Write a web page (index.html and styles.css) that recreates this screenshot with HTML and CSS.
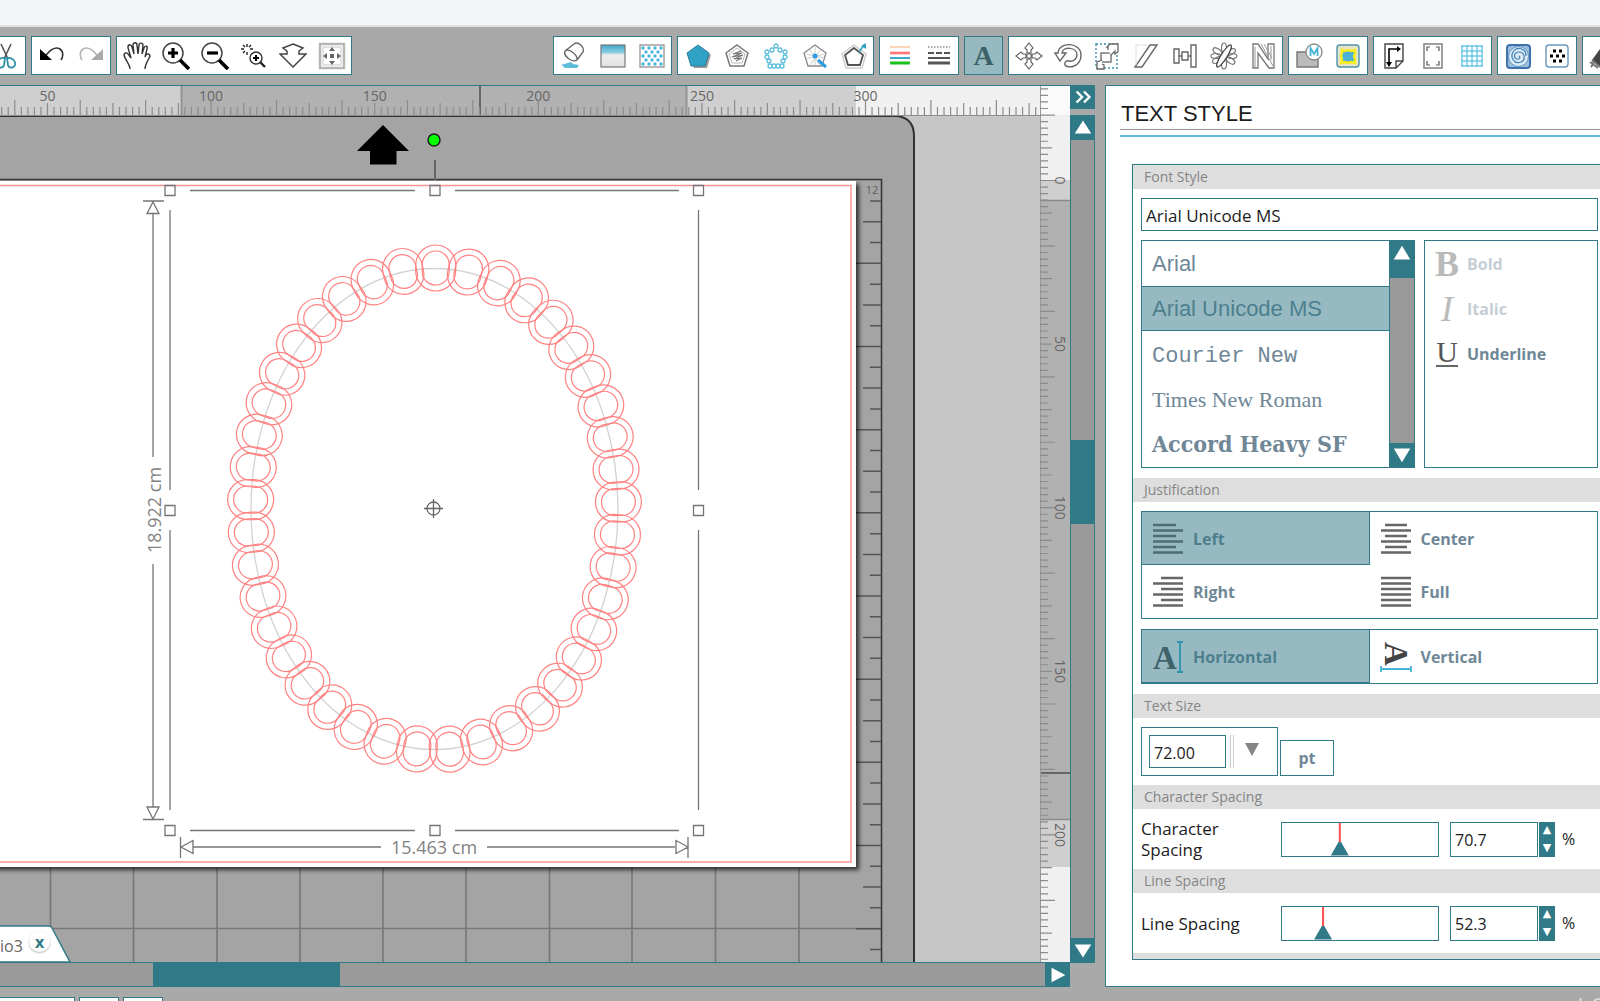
FILE: index.html
```html
<!DOCTYPE html>
<html lang="en">
<head>
  <meta charset="UTF-8">
  <title>Text Style</title>
  <meta name="viewport" content="width=device-width, initial-scale=1.0">
  <link rel="stylesheet" href="styles.css">
</head>
<body>
  <div class="title-strip"></div>

  <header class="toolbar">
    <nav class="tools" aria-label="Edit and view">
      <div class="group group-cut">
        <button aria-label="Cut"><svg viewBox="0 0 28 28"><path d="M9 2l7 15M19 2l-7 15" stroke="#555" stroke-width="1.6"/><g stroke="#2f8ea8" stroke-width="1.8"><path d="M13 16c-5-1-9 3-8 7 1 3 6 4 7 0zM15 16c5-1 9 3 8 7-1 3-6 4-7 0z"/></g></svg></button>
      </div>
      <div class="group">
        <button aria-label="Undo"><svg viewBox="0 0 28 28"><path d="M6 16C12 7 17 4 22 7c4 3 3 8 1 11" stroke="#333" stroke-width="1.6"/><path d="M2 7v11h12z" fill="#000"/></svg></button>
        <button aria-label="Redo"><svg viewBox="0 0 28 28"><path d="M22 16C16 7 11 4 6 7c-4 3-3 8-1 11" stroke="#b5b5b5" stroke-width="1.6"/><path d="M26 7v11H14z" fill="#aaa"/></svg></button>
      </div>
      <div class="group">
        <button aria-label="Pan"><svg viewBox="0 0 28 28"><path d="M7 27c0-5-5-9-6-14 0-2 3-3 4-1l3 4C7 12 5 7 5 5c0-3 3-3 4 0l2 7-1-9c0-3 4-3 4 0l1 9 1-9c0-3 4-2 4 0l-1 9 2-6c1-3 4-2 3 1l-2 8 1-2c1-2 4-1 4 1-2 5-5 8-5 13" stroke="#333" stroke-width="1.4"/></svg></button>
        <button aria-label="Zoom in"><svg viewBox="0 0 28 28"><circle cx="11" cy="11" r="10" stroke="#444" stroke-width="1.5"/><path d="M11 6v10M6 11h10" stroke="#000" stroke-width="3.2"/><path d="M18 18l9 9" stroke="#000" stroke-width="3.6"/></svg></button>
        <button aria-label="Zoom out"><svg viewBox="0 0 28 28"><circle cx="11" cy="11" r="10" stroke="#444" stroke-width="1.5"/><path d="M6 11h11" stroke="#000" stroke-width="3.2"/><path d="M18 18l9 9" stroke="#000" stroke-width="3.6"/></svg></button>
        <button aria-label="Zoom to selection"><svg viewBox="0 0 28 28"><path d="M7 2v3M7 10v3M1 7h3M10 7h3M3 3l2 2M11 3L9 5M3 11l2-2" stroke="#222" stroke-width="1.4"/><circle cx="16" cy="16" r="6" stroke="#333" stroke-width="1.4"/><path d="M16 13v6M13 16h6" stroke="#000" stroke-width="2"/><path d="M20 20l5 5" stroke="#222" stroke-width="2.4"/></svg></button>
        <button aria-label="Drag zoom"><svg viewBox="0 0 28 28"><path d="M14 2l10 4-4 3v3h7L14 25 1 12h7V9L4 6z" stroke="#444" stroke-width="1.5"/></svg></button>
        <button aria-label="Fit to window"><svg viewBox="0 0 28 28"><rect x="2" y="2" width="24" height="24" stroke="#b5b5b5" stroke-width="2.4"/><rect x="5" y="5" width="18" height="18" stroke="#c8c8c8"/><path d="M14 5l3 4h-6zM14 23l3-4h-6zM5 14l4-3v6zM23 14l-4-3v6zM12 12h4v4h-4z" fill="#666"/></svg></button>
      </div>
    </nav>

    <nav class="tools" aria-label="Object tools">
      <div class="group">
        <button aria-label="Fill color"><svg viewBox="0 0 28 28"><path d="M1 23l10-3 2 2 6 1-2 3H5l-2-2z" fill="#5cbcda"/><path d="M5 9L14 2c4-3 11 3 9 8l-6 8c-5 3-14-4-12-9zM5 9c4-3 13 4 12 9" stroke="#666" stroke-width="1.4"/></svg></button>
        <button aria-label="Fill gradient"><svg viewBox="0 0 28 28"><defs><linearGradient id="sky" x1="0" y1="0" x2="0" y2="1"><stop offset="0" stop-color="#3fa9ca"/><stop offset=".35" stop-color="#8fd0e4"/><stop offset=".45" stop-color="#eee"/><stop offset="1" stop-color="#e2e2e2"/></linearGradient></defs><rect x="2" y="3" width="24" height="22" fill="url(#sky)" stroke="#777" stroke-width="1.2"/></svg></button>
        <button aria-label="Fill pattern"><svg viewBox="0 0 28 28"><rect x="2" y="3" width="24" height="22" stroke="#888" stroke-width="1.2"/><g stroke="#4ab6dc" stroke-width="3.4" stroke-linecap="round" stroke-dasharray="0 6"><path d="M5 6h19M8 10h17M5 14h19M8 18h17M5 22h19"/></g></svg></button>
      </div>
      <div class="group">
        <button aria-label="Shadow"><svg viewBox="0 0 28 28"><path d="M16 6l11 7-4 13H10L6 13z" fill="#999"/><path d="M14 3l11 8-4 13H7L3 11z" fill="#2fa2c5" stroke="#2b7f98"/></svg></button>
        <button aria-label="Sketch"><svg viewBox="0 0 28 28"><path d="M14 3l11 8-4 13H7L3 11z" stroke="#777" stroke-width="1.5"/><path d="M14 6l8 6-3 9H9l-3-9z" stroke="#bbb"/><path d="M18 9l-8 3 9-1-10 4 11-2-9 4 8-1-6 3" stroke="#777" stroke-width="1.1"/></svg></button>
        <button aria-label="Rhinestones"><svg viewBox="0 0 28 28"><g stroke="#5fc0dd" stroke-width="1.3"><circle cx="14" cy="4" r="2"/><circle cx="10" cy="8" r="2"/><circle cx="18" cy="8" r="2"/><circle cx="5" cy="10" r="2"/><circle cx="23" cy="10" r="2"/><circle cx="5" cy="15" r="2"/><circle cx="23" cy="15" r="2"/><circle cx="7" cy="19" r="2"/><circle cx="21" cy="19" r="2"/><circle cx="8" cy="24" r="2"/><circle cx="12" cy="24" r="2"/><circle cx="16" cy="24" r="2"/><circle cx="20" cy="24" r="2"/></g></svg></button>
        <button aria-label="Trace"><svg viewBox="0 0 28 28"><path d="M14 3l11 8-4 13H7L3 11z" stroke="#888" stroke-width="1.3"/><path d="M14 5v18M5 12l18 4M23 12L5 17M9 23l10-15M19 23L9 8" stroke="#ccc"/><circle cx="14" cy="14" r="2.5" fill="#2f9be0"/><path d="M17 18l8 7" stroke="#2f9be0" stroke-width="3"/></svg></button>
        <button aria-label="Offset"><svg viewBox="0 0 28 28"><path d="M14 3l12 9-4 14H6L2 12z" stroke="#ccc" stroke-width="1.4"/><path d="M14 6l9 7-3 10H8L5 13z" stroke="#555" stroke-width="1.8"/><path d="M19 10l5-7" stroke="#33a1c4" stroke-width="1.6"/><path d="M26 1v6l-5-3z" fill="#33a1c4"/></svg></button>
      </div>
      <div class="group">
        <button aria-label="Line color"><svg viewBox="0 0 28 28"><path d="M4 5h20" stroke="#fbc9a0" stroke-width="1.5"/><path d="M4 11h20" stroke="#f77" stroke-width="2.6"/><path d="M4 16h20" stroke="#3fa9ca" stroke-width="2"/><path d="M4 21h20" stroke="#1abf1a" stroke-width="3"/></svg></button>
        <button aria-label="Line style"><svg viewBox="0 0 28 28"><path d="M3 5h22" stroke="#555" stroke-width="1.2" stroke-dasharray="1.5 1.5"/><path d="M3 11h22" stroke="#555" stroke-width="2" stroke-dasharray="6 2"/><path d="M3 16h22" stroke="#555" stroke-width="2"/><path d="M3 21h22" stroke="#555" stroke-width="3"/></svg></button>
      </div>
      <div class="group">
        <button class="active letter" aria-label="Text style" aria-pressed="true">A</button>
      </div>
      <div class="group">
        <button aria-label="Move"><svg viewBox="0 0 28 28"><g stroke="#666" stroke-width="1.2"><path d="M14 1l4 5-2 2v3h-4V8l-2-2zM14 27l4-5-2-2v-3h-4v3l-2 2zM1 14l5-4 2 2h3v4H8l-2 2zM27 14l-5-4-2 2h-3v4h3l2 2z"/><path d="M14 11l3 3-3 3-3-3z"/></g></svg></button>
        <button aria-label="Rotate"><svg viewBox="0 0 28 28"><path d="M1 11l3 0C5-1 27 0 27 13c0 12-13 14-16 10-1-3 2-5 4-4 4 1 8-2 8-6 0-8-14-9-15-2h4l-6 8z" stroke="#666" stroke-width="1.4"/></svg></button>
        <button aria-label="Scale"><svg viewBox="0 0 28 28"><rect x="3" y="2" width="21" height="24" stroke="#3a93aa" stroke-width="1.4" stroke-dasharray="2 2"/><rect x="8" y="11" width="10" height="9" fill="#fff" stroke="#666" stroke-width="1.3"/><path d="M15 8V5h-1l3-3h8v8l-3 2V9l-4 4M9 18l-5 2v7h7v-4l-2-1" fill="#fff" stroke="#666" stroke-width="1.3"/></svg></button>
        <button aria-label="Shear"><svg viewBox="0 0 28 28"><path d="M18 3h7L10 25H3z" stroke="#666" stroke-width="1.4"/><path d="M16 3H4v20" stroke="#ddd"/></svg></button>
        <button aria-label="Align"><svg viewBox="0 0 28 28"><path d="M3 7h5v14H3zM11 10h6v8h-6zM20 3h5v22h-5zM8 14h3M17 14h3" stroke="#666" stroke-width="1.4"/></svg></button>
        <button aria-label="Replicate"><svg viewBox="0 0 28 28"><g stroke="#777" stroke-width="1.2"><ellipse cx="14" cy="6" rx="2.5" ry="5"/><ellipse cx="14" cy="22" rx="2.5" ry="5"/><g transform="rotate(60 14 14)"><ellipse cx="14" cy="6" rx="2.5" ry="5"/><ellipse cx="14" cy="22" rx="2.5" ry="5"/></g><g transform="rotate(90 14 14)"><ellipse cx="14" cy="6" rx="2.5" ry="5"/><ellipse cx="14" cy="22" rx="2.5" ry="5"/></g><g transform="rotate(125 14 14)"><ellipse cx="14" cy="6" rx="2.5" ry="5"/><ellipse cx="14" cy="22" rx="2.5" ry="5"/></g><ellipse cx="14" cy="14" rx="3" ry="13" transform="rotate(32 14 14)" fill="#fff" stroke="#444"/></g></svg></button>
        <button aria-label="Nesting"><svg viewBox="0 0 28 28"><path d="M4 26V2h5l10 15V2h6v24h-5L9 11v15z" stroke="#777" stroke-width="1.3"/><path d="M12 2l12 22M15 2l8 14M6 5v20M22 4v14" stroke="#999"/></svg></button>
      </div>
      <div class="group">
        <button aria-label="Modify"><svg viewBox="0 0 28 28"><path d="M2 10h21v15H2z" fill="#bbb" stroke="#777" stroke-width="1.4"/><circle cx="19" cy="10" r="8" fill="#fff" stroke="#888" stroke-width="1.3"/><path d="M15.5 14V6l3.500 6 3.500-6v8" stroke="#45b4d8" stroke-width="1.8"/></svg></button>
        <button aria-label="Trace area"><svg viewBox="0 0 28 28"><rect x="3" y="3" width="22" height="22" rx="3" fill="#e8e4ca" stroke="#4d93aa" stroke-width="1.4"/><path d="M8 8l3 1 3-1 3 1 4-1v4l-1 2 1 3v4l-4-1-3 1-3-1-4 1 1-4-1-3 1-3z" fill="#4db0d6" stroke="#f6ee1a" stroke-width="2.4"/></svg></button>
      </div>
      <div class="group">
        <button aria-label="Page setup"><svg viewBox="0 0 28 28"><path d="M5 2h18v17l-7 7H5zM16 26v-7h7" stroke="#444" stroke-width="1.4"/><path d="M9 24V7h11" stroke="#000" stroke-width="1.6"/><path d="M6 20h6l-3 5zM17 4v6l4-3z" fill="#000"/></svg></button>
        <button aria-label="Registration marks"><svg viewBox="0 0 28 28"><rect x="5" y="2" width="18" height="24" stroke="#888" stroke-width="1.6"/><path d="M8 9V5h3M17 5h3v4M20 19v4h-3M11 23H8v-4" stroke="#555" stroke-width="1.2"/></svg></button>
        <button aria-label="Grid"><svg viewBox="0 0 28 28"><path d="M3 4h22M3 9h22M3 14h22M3 19h22M3 24h22M4 3v22M9 3v22M14 3v22M19 3v22M24 3v22" stroke="#6cc8e6" stroke-width="1.4"/></svg></button>
      </div>
      <div class="group">
        <button aria-label="Library"><svg viewBox="0 0 28 28"><rect x="3" y="3" width="23" height="23" rx="3" fill="#9cc0dc" stroke="#3f72ab" stroke-width="2"/><circle cx="14.5" cy="14.5" r="10" fill="#dceaf4" stroke="#5c93c4"/><path d="M15 14c2 1 0 4-2 3-4-1-3-7 2-7 6 0 7 8 2 10-7 3-11-5-8-10 4-6 13-4 13 4" stroke="#3f7fb8" stroke-width="1.2"/></svg></button>
        <button aria-label="Dot pattern"><svg viewBox="0 0 28 28"><rect x="3" y="3" width="22" height="22" rx="3" stroke="#6a98bd" stroke-width="1.4"/><g stroke="#000" stroke-width="3" stroke-dasharray="3 3"><path d="M10 9h9M7 14h15M10 19h9"/></g></svg></button>
      </div>
      <div class="group group-end">
        <button aria-label="Sketch pen"><svg viewBox="0 0 28 28"><path d="M3 18L14 3l12 6-14 16z" fill="#444"/><path d="M3 18l8 7M1 20l8 6M2 25c2-2 3-4 2-7" stroke="#777" stroke-width="2"/></svg></button>
      </div>
    </nav>
  </header>

  <main class="workspace">
    <section class="document">
      <div class="sheet">
        <div class="sheet-main">
          <svg class="ruler-top" id="rulerTop">
            <rect width="100%" height="30" fill="#f0f0f0"/>
            <rect width="856" height="30" fill="#cfcfcf"/>
            <rect x="181" width="506" height="30" fill="#b1b1b1"/>
            <path d="M181.500 0v29M686.500 0v29" stroke="#939393" stroke-width="2"/>
            <path d="M480 0v29" stroke="#666" stroke-width="2"/>
            <path d="M0 29.500h1600" stroke="#8c8c8c"/>
          </svg>
          <div class="canvas">
            <svg class="drawing">
              <g transform="translate(0 -116)">
                <path d="M-20 116H897q17 2 17 20V1400H-20z" fill="#a4a4a4" stroke="#333" stroke-width="2"/>
                <path d="M50.500 868v500M133.500 868v500M217 868v500M300 868v500M383 868v500M466 868v500M549.500 868v500M632 868v500M715.500 868v500M799 868v500M0 928.500h881" stroke="#777" stroke-width="1.600"/>
                <path d="M-20 179.500H881.500V1400" stroke="#383838" stroke-width="1.600"/>
                <g id="matTicks" stroke="#555" stroke-width="1.500"></g>
                <text x="872" y="194" class="mat-label">12</text>
                <rect class="page" x="-20" y="181" width="876" height="686"/>
                <path d="M-20 185.500H851V862H-20" stroke="#ff9494" stroke-width="1.500"/>

                <path d="M383 125l26 26h-12.500v13.500H370V151h-13z" fill="#000"/>
                <path d="M435 160v20" stroke="#666" stroke-width="2"/>
                <circle cx="434" cy="140" r="6" fill="#0f0" stroke="#222" stroke-width="1.500"/>

                <path id="textPath" d="M434.500 268.500a183.500 240.500 0 0 1 0 481a183.500 240.500 0 0 1 0-481z" stroke="#d2d2d2" stroke-width="1.300"/>
                <g id="rings" stroke="#ff8282" stroke-width="1.200"></g>
                <path d="M424 508.500h19M433.500 499v19" stroke="#666" stroke-width="1.300"/>
                <circle cx="433.500" cy="508.500" r="6.500" stroke="#666" stroke-width="1.300"/>

                <g stroke="#757575" stroke-width="1.300">
                  <path d="M190 190.500h225M455 190.500h224M190 830.500h225M455 830.500h224M170 210v280M170 530v280M698.500 210v280M698.500 530v280"/>
                  <path d="M165 185.500h10v10h-10zM430 185.500h10v10h-10zM693.500 185.500h10v10h-10zM165 505.500h10v10h-10zM693.500 505.500h10v10h-10zM165 825.500h10v10h-10zM430 825.500h10v10h-10zM693.500 825.500h10v10h-10z"/>
                  <path d="M143 201h21M153 202l6 11.500h-12zM153 213v244M153 564v243M153 819l6-12h-12zM143 819.500h21"/>
                  <path d="M180.500 837v21M181 847l12-6.500v13zM193 847h188M487 847h188M688 847l-12-6.500v13zM688 837v21"/>
                </g>
                <text x="434" y="854" class="size-label">15.463 cm</text>
                <text class="size-label" transform="translate(161 510) rotate(-90)">18.922 cm</text>
              </g>
            </svg>
            <div class="doc-tab">
              <svg class="tab-shape" viewBox="0 0 72 37"><path d="M-2 1H49q2 0 3 2L70 37H-2z" fill="#fff" stroke="#307a88" stroke-width="1.500"/></svg>
              <span class="tab-name">io3</span>
              <button class="tab-close" aria-label="Close">x</button>
            </div>
          </div>
        </div>
        <svg class="ruler-side" id="rulerSide">
          <rect width="30" height="100%" fill="#f0f0f0"/>
          <rect width="30" height="29" fill="#fafafa"/>
          <rect y="94" width="30" height="687" fill="#cfcfcf"/>
          <rect y="114" width="30" height="619" fill="#b1b1b1"/>
          <path d="M0 114.500h30M0 733.500h30" stroke="#8a8a8a" stroke-width="1.500"/>
          <path d="M0 687h30" stroke="#666" stroke-width="2"/>
          <path d="M.5 0v1400" stroke="#999"/>
        </svg>
      </div>
      <div class="hscroll">
        <div class="hscroll-track"><div class="hscroll-thumb"></div></div>
        <button class="scroll-btn" aria-label="Scroll right"><svg viewBox="0 0 24 24"><path d="M5 4l15 8-15 8z" fill="#fff"/></svg></button>
      </div>
    </section>

    <div class="vscroll">
      <button class="scroll-btn" aria-label="Collapse panels"><svg viewBox="0 0 24 24"><path d="M5 6l6 6-6 6M13 6l6 6-6 6" stroke="#fff" stroke-width="2.600"/></svg></button>
      <button class="scroll-btn up" aria-label="Scroll up"><svg viewBox="0 0 24 24"><path d="M3 19l9-14 9 14z" fill="#fff"/></svg></button>
      <div class="vscroll-track"><div class="vscroll-thumb"></div></div>
      <button class="scroll-btn" aria-label="Scroll down"><svg viewBox="0 0 24 24"><path d="M3 5l9 14 9-14z" fill="#fff"/></svg></button>
    </div>

    <aside class="side">
      <h1>TEXT STYLE</h1>
      <div class="rules"></div>

      <div class="panel">
        <h2>Font Style</h2>
        <div class="block">
          <input class="field font-name" type="text" value="Arial Unicode MS" aria-label="Font name">
          <div class="font-row">
            <div class="font-list">
              <div class="fonts" role="radiogroup" aria-label="Fonts">
                <label class="font f-sans"><input type="radio" name="font">Arial</label>
                <label class="font f-sans"><input type="radio" name="font" checked>Arial Unicode MS</label>
                <label class="font f-mono"><input type="radio" name="font">Courier New</label>
                <label class="font f-serif"><input type="radio" name="font">Times New Roman</label>
                <label class="font f-heavy"><input type="radio" name="font">Accord Heavy SF</label>
              </div>
              <div class="list-scroll">
                <button class="list-up" aria-label="Up"><svg viewBox="0 0 24 24"><path d="M3 19l9-15 9 15z" fill="#fff"/></svg></button>
                <button class="list-down" aria-label="Down"><svg viewBox="0 0 24 24"><path d="M3 5l9 15 9-15z" fill="#fff"/></svg></button>
              </div>
            </div>
            <div class="weights">
              <button disabled><span class="glyph g-bold">B</span>Bold</button>
              <button disabled><span class="glyph g-italic">I</span>Italic</button>
              <button><span class="glyph g-under">U</span>Underline</button>
            </div>
          </div>
        </div>

        <h2>Justification</h2>
        <div class="block">
          <div class="choices" role="radiogroup" aria-label="Justification">
            <label class="choice"><input type="radio" name="just" checked><svg viewBox="0 0 32 32"><path d="M1 2h23M1 7.500h30M1 13h23M1 18.500h30M1 24h23M1 29.500h30" stroke="#4d6c74" stroke-width="2.400"/></svg>Left</label>
            <label class="choice"><input type="radio" name="just"><svg viewBox="0 0 32 32"><path d="M5 2h22M1 7.500h30M5 13h22M1 18.500h30M5 24h22M1 29.500h30" stroke="#666" stroke-width="2.400"/></svg>Center</label>
            <label class="choice"><input type="radio" name="just"><svg viewBox="0 0 32 32"><path d="M9 2h22M1 7.500h30M9 13h22M1 18.500h30M9 24h22M1 29.500h30" stroke="#666" stroke-width="2.400"/></svg>Right</label>
            <label class="choice"><input type="radio" name="just"><svg viewBox="0 0 32 32"><path d="M1 2h30M1 7.500h30M1 13h30M1 18.500h30M1 24h30M1 29.500h30" stroke="#666" stroke-width="2.400"/></svg>Full</label>
          </div>
          <div class="choices" role="radiogroup" aria-label="Orientation">
            <label class="choice"><input type="radio" name="dir" checked><svg viewBox="0 0 32 32"><text x="13" y="28" class="icon-a" fill="#3f626b">A</text><path d="M25 1h6M28 1v30M25 31h6" stroke="#2f93b0" stroke-width="1.800"/></svg>Horizontal</label>
            <label class="choice"><input type="radio" name="dir"><svg viewBox="0 0 32 32"><text class="icon-a" fill="#444" transform="translate(5 13) rotate(90)">A</text><path d="M1 25v6M1 28h30M31 25v6" stroke="#45b4d8" stroke-width="1.800"/></svg>Vertical</label>
          </div>
        </div>

        <h2>Text Size</h2>
        <div class="block size-row">
          <div class="combo">
            <input class="field" type="text" value="72.00" aria-label="Text size">
            <button aria-label="Choose size"><svg viewBox="0 0 16 16"><path d="M1 1h14L8 14z" fill="#858585"/></svg></button>
          </div>
          <button class="unit">pt</button>
        </div>

        <h2>Character Spacing</h2>
        <div class="spacing">
          <label for="charRange">Character Spacing</label>
          <input class="slider" type="range" id="charRange" min="0" max="200" step="any" value="70.7">
          <input class="field" type="text" value="70.7" aria-label="Character spacing value">
          <div class="spin"><button aria-label="Increase">▲</button><button aria-label="Decrease">▼</button></div>
          <span>%</span>
        </div>

        <h2>Line Spacing</h2>
        <div class="spacing">
          <label for="lineRange">Line Spacing</label>
          <input class="slider" type="range" id="lineRange" min="0" max="225" step="any" value="52.3">
          <input class="field" type="text" value="52.3" aria-label="Line spacing value">
          <div class="spin"><button aria-label="Increase">▲</button><button aria-label="Decrease">▼</button></div>
          <span>%</span>
        </div>
        <div class="next-head"></div>
      </div>
    </aside>
  </main>

  <footer class="bottom-bar">
    <button class="wide" aria-label="Library view"></button>
    <button aria-label="Split view"></button>
    <button aria-label="Single view"></button>
    <svg class="corner" viewBox="0 0 24 14"><path d="M4.500 11v3M18 14q2-2 6-2" stroke="#e8e8e8" stroke-width="1.500"/></svg>
  </footer>

  <script src="script.js"></script>
</body>
</html>
```

FILE: styles.css
```css
* {
  box-sizing: border-box;
}

body {
  margin: 0;
  height: 100vh;
  display: flex;
  flex-direction: column;
  overflow: hidden;
  background-color: #a9a9a9;
  font-family: "Open Sans", "Noto Sans", sans-serif;
  font-size: 16px;
  color: #1c1c1c;
}

svg {
  fill: none;
}

button {
  margin: 0;
  padding: 0;
  border: none;
  background: none;
  font-family: inherit;
  cursor: pointer;
}

.title-strip {
  flex: none;
  height: 27px;
  background-color: #f3f5f8;
  border-bottom: 2px solid #dfe1e3;
}

/* toolbar */
.toolbar {
  flex: none;
  display: flex;
  justify-content: space-between;
  padding: 9px 0 10px;
}

.tools {
  display: flex;
  gap: 5px;
}

.group {
  display: flex;
  background-color: #fff;
  border: 1px solid #307a88;
}

.group button {
  width: 39px;
  height: 37px;
  display: flex;
  align-items: center;
  justify-content: center;
}

.group svg {
  width: 28px;
  height: 28px;
}

.group-cut {
  margin-left: -15px;
}

.group-end {
  width: 18px;
  border-right: none;
  overflow: hidden;
}

.group-end button {
  flex: none;
}

.group .active {
  width: 37px;
  background-color: #97bac2;
}

.letter {
  font-family: "Liberation Serif", serif;
  font-size: 28px;
  font-weight: bold;
  color: #3c5f68;
}

/* work area */
.workspace {
  flex: 1;
  min-height: 0;
  display: flex;
}

.document {
  flex: 1;
  min-width: 0;
  display: flex;
  flex-direction: column;
}

.sheet {
  flex: 1;
  min-height: 0;
  display: flex;
  border-top: 1px solid #307a88;
}

.sheet-main {
  flex: 1;
  min-width: 0;
  display: flex;
  flex-direction: column;
}

.ruler-top {
  display: block;
  width: 100%;
  height: 30px;
}

.ruler-side {
  display: block;
  flex: none;
  width: 30px;
  height: 100%;
}

.ruler-label {
  font-size: 14px;
  fill: #666;
  text-anchor: middle;
}

.canvas {
  position: relative;
  flex: 1;
  min-height: 0;
  background-color: #c6c6c6;
  overflow: hidden;
}

.drawing {
  display: block;
  width: 100%;
  height: 100%;
}

.page {
  fill: #fff;
  filter: drop-shadow(3px 3px 2px rgba(0, 0, 0, 0.7));
}

.mat-label {
  font-size: 11px;
  fill: #5c5c5c;
  text-anchor: middle;
}

.size-label {
  font-size: 18px;
  fill: #828282;
  text-anchor: middle;
}

.doc-tab {
  position: absolute;
  left: 0;
  bottom: 0;
  width: 72px;
  height: 37px;
  display: flex;
  align-items: center;
}

.tab-shape {
  position: absolute;
  left: 0;
  top: 0;
  width: 72px;
  height: 37px;
}

.tab-name {
  position: relative;
  width: 29px;
  padding-top: 4px;
  font-size: 16px;
  color: #666;
}

.tab-close {
  position: relative;
  width: 21px;
  height: 21px;
  margin-bottom: 4px;
  border-radius: 50%;
  background-color: #fff;
  box-shadow: 0 1px 2px rgba(0, 0, 0, 0.3);
  color: #307a88;
  font-size: 16px;
  line-height: 16px;
  font-weight: bold;
}

/* scrollbars */
.scroll-btn {
  flex: none;
  width: 25px;
  height: 24px;
  background-color: #307a88;
  display: flex;
  align-items: center;
  justify-content: center;
}

.scroll-btn svg {
  width: 22px;
  height: 22px;
}

.hscroll {
  flex: none;
  display: flex;
  height: 25px;
  border: solid #307a88;
  border-width: 1px 0;
  background-color: #9a9a9a;
}

.hscroll-track {
  flex: 1;
}

.hscroll-thumb {
  width: 187px;
  height: 100%;
  margin-left: 153px;
  background-color: #307a88;
}

.vscroll {
  flex: none;
  width: 25px;
  margin-bottom: 24px;
  display: flex;
  flex-direction: column;
}

.vscroll .up {
  margin-top: 6px;
}

.vscroll-track {
  flex: 1;
  padding-top: 300px;
  background-color: #9a9a9a;
  border: 1px solid #307a88;
}

.vscroll-thumb {
  height: 84px;
  background-color: #307a88;
}

/* text style panel */
.side {
  flex: none;
  width: 495px;
  margin-left: 10px;
  background-color: #fff;
  border: 1px solid #307a88;
  border-right: none;
  overflow: hidden;
}

h1 {
  margin: 13px 0 0 15px;
  font-family: "Liberation Sans", sans-serif;
  font-size: 22px;
  line-height: 30px;
  font-weight: normal;
}

.rules {
  height: 8px;
  margin-left: 14px;
  border-top: 1px solid #999;
  border-bottom: 2px solid #5cbcda;
}

.panel {
  margin: 27px 0 0 26px;
  border: 1px solid #307a88;
  border-right: none;
}

h2 {
  margin: 0;
  height: 24px;
  padding-left: 11px;
  background-color: #dedede;
  font-size: 14px;
  line-height: 24px;
  font-weight: normal;
  color: #858585;
}

.next-head {
  height: 6px;
  background-color: #dedede;
}

.block {
  display: flex;
  flex-direction: column;
  gap: 9px;
  padding: 9px 2px 10px 8px;
}

.field {
  min-width: 0;
  border: 1px solid #307a88;
  padding: 2px 4px 0;
  background-color: #fff;
  font-family: inherit;
  font-size: 16px;
  color: #1c1c1c;
}

.font-name {
  width: 100%;
  height: 33px;
  font-size: 17px;
}

.font-row {
  display: flex;
  gap: 9px;
  height: 228px;
}

.font-list {
  flex: 1;
  display: flex;
  border: 1px solid #307a88;
}

.fonts {
  flex: 1;
}

.font {
  display: block;
  height: 45px;
  padding-left: 10px;
  border: solid transparent;
  border-width: 1px 0;
  line-height: 43px;
  font-size: 22px;
  color: #6f8797;
}

.font input,
.choice input {
  position: absolute;
  opacity: 0;
}

.font:has(input:checked) {
  background-color: #97bac2;
  border-color: #307a88;
  color: #4d7f8e;
}

.f-sans {
  font-family: "Liberation Sans", sans-serif;
}

.f-mono {
  font-family: "Liberation Mono", monospace;
  line-height: 49px;
}

.f-serif {
  font-family: "Liberation Serif", serif;
  line-height: 45px;
}

.f-heavy {
  font-family: "DejaVu Serif Condensed", "DejaVu Serif", serif;
  font-weight: bold;
  font-size: 23px;
}

.list-scroll {
  width: 25px;
  display: flex;
  flex-direction: column;
  justify-content: space-between;
  background-color: #9a9a9a;
  border-left: 1px solid #307a88;
}

.list-scroll button {
  height: 24px;
  background-color: #307a88;
}

.list-scroll .list-up {
  height: 37px;
  padding-bottom: 14px;
}

.list-scroll svg {
  display: block;
  width: 22px;
  height: 22px;
  margin: 0 auto;
}

.weights {
  width: 174px;
  border: 1px solid #307a88;
}

.weights button {
  display: flex;
  align-items: center;
  width: 100%;
  height: 45px;
  padding-left: 9px;
  font-size: 16px;
  font-weight: bold;
  color: #6f8797;
}

.weights button:disabled {
  color: #c5ced5;
}

.glyph {
  width: 26px;
  margin-right: 7px;
  font-family: "Liberation Serif", serif;
  font-size: 36px;
  line-height: 34px;
  font-weight: normal;
  text-align: center;
  color: #555;
}

button:disabled .glyph {
  color: #bababa;
}

.g-bold {
  font-weight: bold;
}

.g-italic {
  font-style: italic;
}

.g-under {
  width: 22px;
  height: 27px;
  margin: 0 9px 0 2px;
  font-size: 30px;
  line-height: 24px;
  border-bottom: 2px solid #666;
}

.choices {
  display: grid;
  grid-template-columns: 1fr 1fr;
  border: 1px solid #307a88;
}

.choices + .choices {
  margin-top: 1px;
}

.choice {
  display: flex;
  align-items: center;
  height: 53px;
  padding-left: 10px;
  font-size: 16px;
  font-weight: bold;
  color: #6f8797;
}

.choice:has(input:checked) {
  background-color: #97bac2;
  box-shadow: inset -1px -1px 0 #307a88;
  color: #4d7f8e;
}

.choice svg {
  width: 32px;
  height: 32px;
  margin-right: 9px;
}

.icon-a {
  font-family: "Liberation Serif", serif;
  font-size: 33px;
  font-weight: bold;
  text-anchor: middle;
}

.size-row {
  flex-direction: row;
  align-items: flex-end;
  gap: 2px;
  padding-bottom: 9px;
}

.combo {
  display: flex;
  width: 137px;
  height: 49px;
  padding: 7px;
  border: 1px solid #307a88;
}

.combo .field {
  width: 77px;
}

.combo button {
  flex: 1;
  margin-left: 4px;
  border-left: 4px double #ccc;
}

.combo svg {
  width: 16px;
  height: 16px;
}

.unit {
  width: 54px;
  height: 36px;
  border: 1px solid #307a88;
  font-size: 16px;
  font-weight: bold;
  color: #6f8797;
}

.spacing {
  display: flex;
  align-items: center;
  height: 60px;
  padding-left: 8px;
  line-height: 21px;
}

.spacing label {
  flex: none;
  width: 140px;
  padding-right: 30px;
  font-size: 17px;
}

.spacing .field {
  width: 88px;
  height: 35px;
  margin-left: 11px;
}

.slider {
  -webkit-appearance: none;
  appearance: none;
  width: 158px;
  height: 35px;
  margin: 0;
  background-color: #fff;
  border: 1px solid #307a88;
}

.slider::-webkit-slider-thumb {
  -webkit-appearance: none;
  width: 18px;
  height: 33px;
  background: linear-gradient(#ff4d4d 19px, #307a88 19px);
  clip-path: polygon(8px 0, 10px 0, 10px 19px, 18px 33px, 0 33px, 8px 19px);
}

.spin {
  display: flex;
  flex-direction: column;
  width: 16px;
  height: 35px;
  margin: 0 7px 0 1px;
  background-color: #307a88;
}

.spin button {
  flex: 1;
  font-family: "DejaVu Sans", sans-serif;
  font-size: 11px;
  line-height: 16px;
  color: #fff;
}

/* bottom strip */
.bottom-bar {
  flex: none;
  display: flex;
  gap: 4px;
  height: 14px;
  padding-top: 10px;
  overflow: hidden;
}

.bottom-bar button {
  width: 40px;
  height: 24px;
  background-color: #fff;
  border: 1px solid #307a88;
}

.bottom-bar .wide {
  width: 75px;
  border-left: none;
}

.corner {
  flex: none;
  width: 24px;
  height: 14px;
  margin: -10px 0 0 auto;
}
```

FILE: script.js
```js
const NS = 'http://www.w3.org/2000/svg';

function add(parent, name, attrs, text) {
  const el = document.createElementNS(NS, name);
  for (const key in attrs) {
    el.setAttribute(key, attrs[key]);
  }
  if (text !== undefined) {
    el.textContent = text;
  }
  parent.appendChild(el);
}

// millimetres to pixels at the current zoom
const SCALE = 3.272;
const WIDTH = 300;
const HEIGHT = 200;

function tickLength(mm) {
  if (mm % 20 === 0) return 15;
  if (mm % 10 === 0) return 12;
  return 8;
}

const rulerTop = document.getElementById('rulerTop');
let path = '';
for (let mm = 36; mm <= 480; mm += 2) {
  const x = (mm - 50) * SCALE + 47.5;
  path += `M${x} 29v-${tickLength(mm)}`;
  if (mm % 50 === 0 && mm <= WIDTH) {
    add(rulerTop, 'text', { x: x, y: 15, class: 'ruler-label' }, mm);
  }
}
add(rulerTop, 'path', { d: path, stroke: '#8c8c8c', 'stroke-width': 1.2 });

const rulerSide = document.getElementById('rulerSide');
path = '';
for (let mm = -28; mm <= 400; mm += 2) {
  const y = mm * SCALE + 94.5;
  path += `M0 ${y}h${tickLength(mm)}`;
  if (mm >= 0 && mm % 50 === 0 && mm <= HEIGHT) {
    add(rulerSide, 'text', { transform: `translate(15 ${y}) rotate(90)`, class: 'ruler-label' }, mm);
  }
}
add(rulerSide, 'path', { d: path, stroke: '#8c8c8c', 'stroke-width': 1.2 });

// inch ruler printed on the mat
const matTicks = document.getElementById('matTicks');
path = '';
for (let i = 1; i < 60; i++) {
  const len = i % 4 === 0 ? 25 : i % 2 === 0 ? 18 : 11;
  path += `M881 ${180.2 + i * 20.79}h-${len}`;
}
add(matTicks, 'path', { d: path });

// letter "o" repeated along the ellipse
const textPath = document.getElementById('textPath');
const rings = document.getElementById('rings');
const total = textPath.getTotalLength();
const COUNT = 41;
for (let i = 0; i < COUNT; i++) {
  const at = (i * total / COUNT + 1.2) % total;
  const a = textPath.getPointAtLength(at - 1);
  const b = textPath.getPointAtLength(at + 1);
  const p = textPath.getPointAtLength(at);
  const angle = Math.atan2(b.y - a.y, b.x - a.x) * 180 / Math.PI;
  const transform = `translate(${p.x} ${p.y}) rotate(${angle})`;
  add(rings, 'rect', { x: -20, y: -23.5, width: 40, height: 46, rx: 20, transform: transform });
  add(rings, 'rect', { x: -13.5, y: -17.5, width: 27, height: 34, rx: 13.5, transform: transform });
}
```
